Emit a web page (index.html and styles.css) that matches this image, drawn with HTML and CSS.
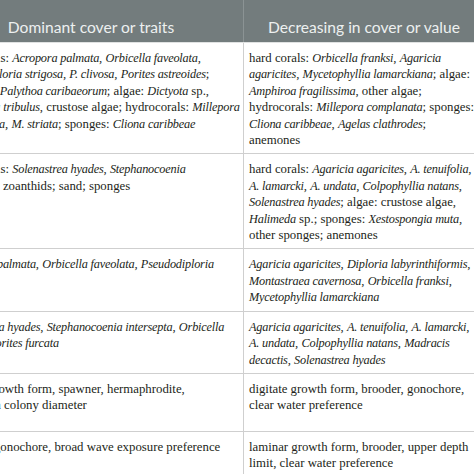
FILE: index.html
```html
<!DOCTYPE html>
<html>
<head>
<meta charset="utf-8">
<link rel="stylesheet" href="styles.css">
</head>
<body>
<div class="page">
  <div class="table">
    <div class="row head">
      <div class="cell c1">Dominant cover or traits</div>
      <div class="cell c2">Decreasing in cover or value</div>
    </div>
    <div class="row">
      <div class="cell c1">
        <span class="ln">hard corals: <i>Acropora palmata</i>, <i>Orbicella faveolata</i>,</span>
        <span class="ln"><i>Pseudodiploria strigosa</i>, <i>P. clivosa</i>, <i>Porites astreoides</i>;</span>
        <span class="ln">zoanthid: <i>Palythoa caribaeorum</i>; algae: <i>Dictyota</i> sp.,</span>
        <span class="ln"><i>Turbinaria tribulus</i>, crustose algae; hydrocorals: <i>Millepora</i></span>
        <span class="ln"><i>complanata</i>, <i>M. striata</i>; sponges: <i>Cliona caribbeae</i></span>
      </div>
      <div class="cell c2">
        <span class="ln">hard corals: <i>Orbicella franksi</i>, <i>Agaricia</i></span>
        <span class="ln"><i>agaricites</i>, <i>Mycetophyllia lamarckiana</i>; algae:</span>
        <span class="ln"><i>Amphiroa fragilissima</i>, other algae;</span>
        <span class="ln">hydrocorals: <i>Millepora complanata</i>; sponges:</span>
        <span class="ln"><i>Cliona caribbeae</i>, <i>Agelas clathrodes</i>;</span>
        <span class="ln">anemones</span>
      </div>
    </div>
    <div class="row">
      <div class="cell c1">
        <span class="ln">hard corals: <i>Solenastrea hyades</i>, <i>Stephanocoenia</i></span>
        <span class="ln"><i>intersepta</i>; zoanthids; sand; sponges</span>
      </div>
      <div class="cell c2">
        <span class="ln">hard corals: <i>Agaricia agaricites</i>, <i>A. tenuifolia</i>,</span>
        <span class="ln"><i>A. lamarcki</i>, <i>A. undata</i>, <i>Colpophyllia natans</i>,</span>
        <span class="ln"><i>Solenastrea hyades</i>; algae: crustose algae,</span>
        <span class="ln"><i>Halimeda</i> sp.; sponges: <i>Xestospongia muta</i>,</span>
        <span class="ln">other sponges; anemones</span>
      </div>
    </div>
    <div class="row">
      <div class="cell c1">
        <span class="ln"><i>Acropora palmata</i>, <i>Orbicella faveolata</i>, <i>Pseudodiploria</i></span>
        <span class="ln"><i>strigosa</i></span>
      </div>
      <div class="cell c2">
        <span class="ln"><i>Agaricia agaricites</i>, <i>Diploria labyrinthiformis</i>,</span>
        <span class="ln"><i>Montastraea cavernosa</i>, <i>Orbicella franksi</i>,</span>
        <span class="ln"><i>Mycetophyllia lamarckiana</i></span>
      </div>
    </div>
    <div class="row">
      <div class="cell c1">
        <span class="ln"><i>Solenastrea hyades</i>, <i>Stephanocoenia intersepta</i>, <i>Orbicella</i></span>
        <span class="ln"><i>franksi</i>, <i>Porites furcata</i></span>
      </div>
      <div class="cell c2">
        <span class="ln"><i>Agaricia agaricites</i>, <i>A. tenuifolia</i>, <i>A. lamarcki</i>,</span>
        <span class="ln"><i>A. undata</i>, <i>Colpophyllia natans</i>, <i>Madracis</i></span>
        <span class="ln"><i>decactis</i>, <i>Solenastrea hyades</i></span>
      </div>
    </div>
    <div class="row tall">
      <div class="cell c1">
        <span class="ln">tabular growth form, spawner, hermaphrodite,</span>
        <span class="ln">maximum colony diameter</span>
      </div>
      <div class="cell c2">
        <span class="ln">digitate growth form, brooder, gonochore,</span>
        <span class="ln">clear water preference</span>
      </div>
    </div>
    <div class="row last">
      <div class="cell c1">
        <span class="ln">boulder, gonochore, broad wave exposure preference</span>
      </div>
      <div class="cell c2">
        <span class="ln">laminar growth form, brooder, upper depth</span>
        <span class="ln">limit, clear water preference</span>
      </div>
    </div>
  </div>
</div>
</body>
</html>
```
FILE: styles.css
```css
html, body {
  margin: 0;
  padding: 0;
  background: #ffffff;
}
.page {
  width: 474px;
  height: 474px;
  overflow: hidden;
}
.table {
  margin-left: -61px;
  width: 545px;
  font-family: "Liberation Serif", "Times New Roman", serif;
  font-size: 12.8px;
  line-height: 16.4px;
  color: #231f20;
}
.table i {
  font-size: 12.3px;
  letter-spacing: -0.2px;
}
.row {
  display: grid;
  grid-template-columns: 305px 240px;
  border-bottom: 1px solid #cfcfcf;
}
.cell {
  box-sizing: border-box;
  padding: 7px 6px 5px 5px;
  overflow: hidden;
}
.c1 {
  border-right: 1px solid #cfcfcf;
  padding-left: 10px;
}
.ln {
  display: block;
  white-space: nowrap;
}
.head {
  height: 42px;
  background: #737c7d;
  border-bottom: 1px solid #e0e2e2;
  font-family: Lato, "Open Sans", sans-serif;
  font-size: 15.6px;
  color: #edf0f0;
}
.head .cell {
  display: flex;
  align-items: center;
  justify-content: center;
  padding: 13px 0 0 0;
}
.head .c1 {
  border-right-color: #8b9394;
}
.tall {
  min-height: 57px;
}
.last {
  border-bottom: none;
}
```
